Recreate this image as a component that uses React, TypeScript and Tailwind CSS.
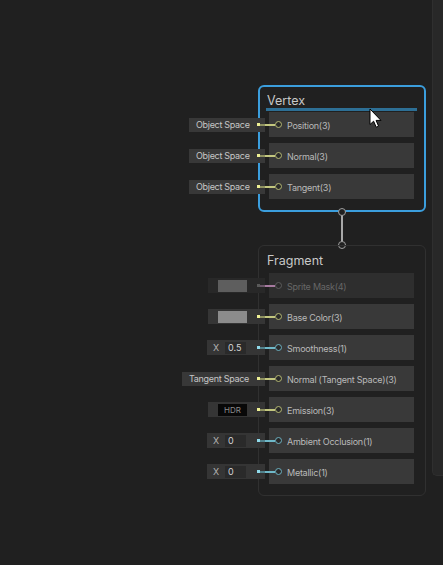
import React from "react";

type Kind = "v3" | "f" | "v4dim";

type Field =
  | { type: "text"; label: string; width: string }
  | { type: "swatch"; color: string; dim?: boolean }
  | { type: "float"; value: string }
  | { type: "hdr" };

type Row = { label: string; kind: Kind; field: Field; dim?: boolean };

const kindColors: Record<Kind, { dot: string; line: string; lineDim: string; ring: string }> = {
  v3: { dot: "bg-[#eef094]", line: "bg-[#c3c77f]", lineDim: "bg-[#8e9160]", ring: "border-[#b4b872]" },
  f: { dot: "bg-[#8fdaea]", line: "bg-[#6fb9c9]", lineDim: "bg-[#52828c]", ring: "border-[#6cb1c1]" },
  v4dim: { dot: "bg-[#5a5a5a]", line: "bg-[#a77aa0]", lineDim: "bg-[#6a5668]", ring: "border-[#5c5c5c]" },
};

function PortEnd({ kind }: { kind: Kind }) {
  const c = kindColors[kind];
  return (
    <div className="ml-auto flex items-center">
      <div className={"w-[3px] h-[3px] " + c.dot} />
      <div className={"w-[5px] h-[2px] " + c.lineDim} />
    </div>
  );
}

function InputField({ field, kind }: { field: Field; kind: Kind }) {
  if (field.type === "text") {
    return (
      <div
        className={
          "h-[14px] bg-[#383838] flex items-center pl-[7px] text-[9px] tracking-[-0.3px] leading-[14px] text-[#c6c6c6] whitespace-nowrap " +
          field.width
        }
      >
        <span>{field.label}</span>
        <PortEnd kind={kind} />
      </div>
    );
  }
  if (field.type === "swatch") {
    return (
      <div
        className={
          "w-[57px] h-[15px] flex items-center pl-[10px] " + (field.dim ? "bg-[#282828]" : "bg-[#353535]")
        }
      >
        <div className="w-[29px] h-[12px]" style={{ background: field.color }} />
        <PortEnd kind={kind} />
      </div>
    );
  }
  if (field.type === "hdr") {
    return (
      <div className="w-[57px] h-[15px] bg-[#353535] flex items-center pl-[10px]">
        <div className="w-[29px] h-[12px] bg-[#080808] flex items-center justify-center text-[8px] text-[#8c8c8c] leading-none">
          HDR
        </div>
        <PortEnd kind={kind} />
      </div>
    );
  }
  return (
    <div className="w-[58px] h-[15px] bg-[#353535] flex items-center">
      <span className="w-[18px] text-center text-[9px] text-[#b4b4b4] leading-none">X</span>
      <div className="w-[21px] h-[12px] bg-[#2a2a2a] flex items-center pl-[3px] text-[9px] text-[#d2d2d2] leading-none">
        {field.value}
      </div>
      <PortEnd kind={kind} />
    </div>
  );
}

function PortRow({ row }: { row: Row }) {
  const c = kindColors[row.kind];
  return (
    <div className="flex items-center justify-end h-[25px]">
      <InputField field={row.field} kind={row.kind} />
      <div className={"w-[4px] h-[2px] " + c.line} />
      <div
        className={
          "w-[145px] h-[25px] flex items-center text-[9px] tracking-[-0.25px] " +
          (row.dim ? "bg-[#2e2e2e] text-[#676767]" : "bg-[#393939] text-[#bababa]")
        }
      >
        <div className={"w-[6px] h-[2px] " + c.line} />
        <div className={"w-[7px] h-[7px] rounded-full border-[1.5px] bg-[#2a2a2a] " + c.ring} />
        <span className="ml-[5px] mt-[3px] whitespace-nowrap">{row.label}</span>
      </div>
    </div>
  );
}

const vertexRows: Row[] = [
  { label: "Position(3)", kind: "v3", field: { type: "text", label: "Object Space", width: "w-[76px]" } },
  { label: "Normal(3)", kind: "v3", field: { type: "text", label: "Object Space", width: "w-[76px]" } },
  { label: "Tangent(3)", kind: "v3", field: { type: "text", label: "Object Space", width: "w-[76px]" } },
];

const fragmentRows: Row[] = [
  { label: "Sprite Mask(4)", kind: "v4dim", dim: true, field: { type: "swatch", color: "#5e5e5e", dim: true } },
  { label: "Base Color(3)", kind: "v3", field: { type: "swatch", color: "#8c8c8c" } },
  { label: "Smoothness(1)", kind: "f", field: { type: "float", value: "0.5" } },
  { label: "Normal (Tangent Space)(3)", kind: "v3", field: { type: "text", label: "Tangent Space", width: "w-[83px]" } },
  { label: "Emission(3)", kind: "v3", field: { type: "hdr" } },
  { label: "Ambient Occlusion(1)", kind: "f", field: { type: "float", value: "0" } },
  { label: "Metallic(1)", kind: "f", field: { type: "float", value: "0" } },
];

export default function App() {
  return (
    <div
      className="relative w-[443px] h-[565px] bg-[#202020] overflow-hidden"
      style={{ fontFamily: "Inter, 'Noto Sans', sans-serif" }}
    >
      {/* right side panel */}
      <div className="absolute right-0 top-0 w-[11px] h-[476px] bg-[#282828] rounded-bl-[5px] border-l border-b border-[#2f2f2f]" />

      {/* Vertex node */}
      <div className="absolute left-[258px] top-[85px] w-[168px] h-[127px] border-2 border-[#3b9edd] rounded-[6px] bg-[#202020] flex flex-col">
        <div className="pl-[7px] pt-[6px] text-[12.5px] leading-[15px] text-[#c8c8c8]">Vertex</div>
        <div className="ml-[6px] mr-[7px] h-[3px] bg-[#2d6f95]" />
        <div className="mt-[1px] -ml-[90px] mr-[10px] flex flex-col gap-[6px]">
          {vertexRows.map((r) => (
            <PortRow key={r.label} row={r} />
          ))}
        </div>
      </div>

      {/* connector between nodes */}
      <div className="absolute left-[341px] top-[212px] w-[2px] h-[33px] bg-[#a8a8a8]" />
      <div className="absolute left-[338px] top-[208px] w-[8px] h-[8px] rounded-full border-[1.5px] border-[#a0a0a0] bg-[#202020]" />
      <div className="absolute left-[338px] top-[241px] w-[8px] h-[8px] rounded-full border-[1.5px] border-[#a0a0a0] bg-[#202020]" />

      {/* Fragment node */}
      <div className="absolute left-[258px] top-[245px] w-[168px] h-[251px] border border-[#303030] rounded-[6px] flex flex-col">
        <div className="pl-[8px] pt-[7px] pb-[4px] text-[12.5px] leading-[16px] text-[#c8c8c8]">Fragment</div>
        <div className="-ml-[90px] mr-[11px] flex flex-col gap-[6px]">
          {fragmentRows.map((r) => (
            <PortRow key={r.label} row={r} />
          ))}
        </div>
      </div>

      {/* mouse cursor */}
      <svg className="absolute left-[369px] top-[108px]" width="14" height="21" viewBox="0 0 14 21">
        <path
          d="M1 1 L1 16.5 L4.6 13.2 L7.2 19.2 L9.6 18.2 L7.1 12.4 L12 12.4 Z"
          fill="#ffffff"
          stroke="#000000"
          strokeWidth="1"
          strokeLinejoin="round"
        />
      </svg>
    </div>
  );
}
